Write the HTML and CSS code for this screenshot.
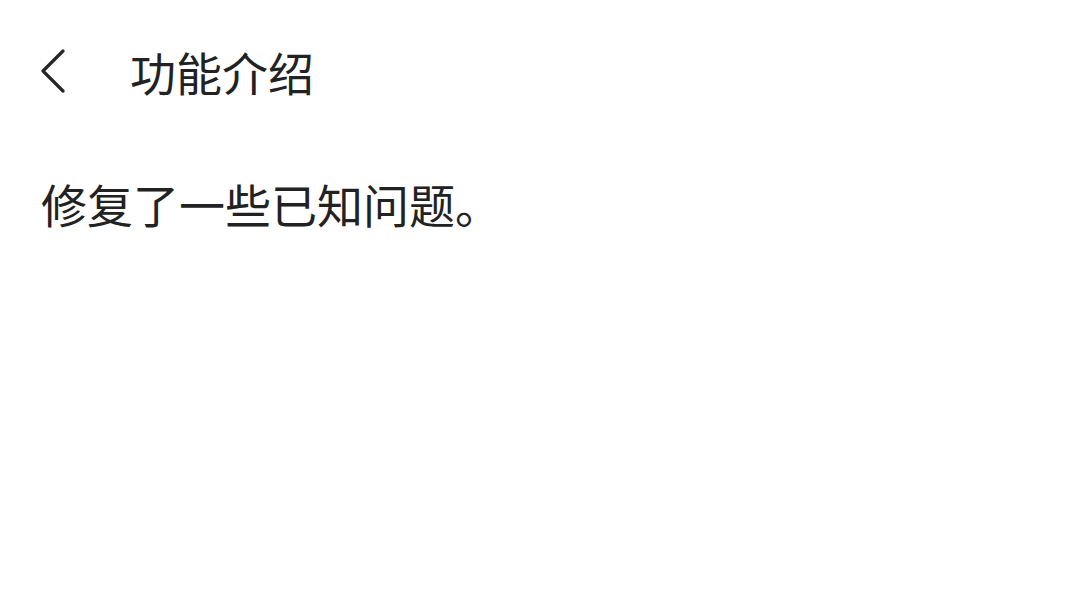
FILE: index.html
```html
<!DOCTYPE html>
<html lang="zh-CN">
<head>
<meta charset="utf-8">
<link rel="stylesheet" href="styles.css">
</head>
<body>
<div class="page">
  <header class="topbar">
    <span class="back">
      <svg width="26" height="44" viewBox="0 0 26 44"><path d="M22 2 L2 22 L22 42" fill="none" stroke="#262626" stroke-width="3.2" stroke-linecap="round" stroke-linejoin="round"/></svg>
    </span>
    <h1 class="title">功能介绍</h1>
  </header>
  <p class="content">修复了一些已知问题。</p>
</div>
</body>
</html>
```
FILE: styles.css
```css
html, body {
  margin: 0;
  padding: 0;
  background: #ffffff;
}
body {
  width: 1074px;
  height: 594px;
  overflow: hidden;
  font-family: "Noto Sans CJK SC", "Noto Sans", sans-serif;
  color: #222222;
}
.page {
  padding: 0 0 0 41px;
}
.topbar {
  display: flex;
  align-items: center;
  height: 142px;
}
.back {
  display: flex;
  width: 89px;
}
.title {
  margin: 0;
  font-size: 46px;
  font-weight: 400;
  line-height: 60px;
}
.content {
  margin: 0;
  font-size: 46px;
  line-height: 60px;
  padding-top: 31px;
}
```
